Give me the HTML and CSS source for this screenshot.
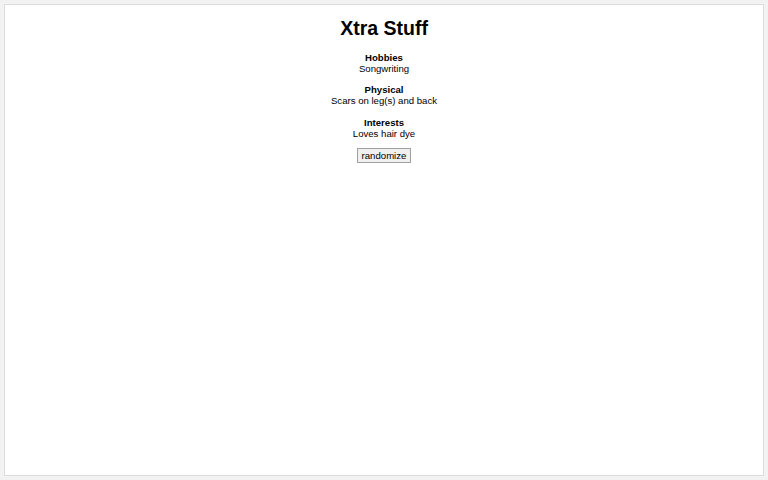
FILE: index.html
```html
<!DOCTYPE html>
<html lang="en">
<head>
  <meta charset="UTF-8">
  <title>Xtra Stuff</title>
  <link rel="stylesheet" href="styles.css">
</head>
<body>
  <div class="card">
    <h1>Xtra Stuff</h1>
    <div class="field">
      <div class="label">Hobbies</div>
      <div class="value">Songwriting</div>
    </div>
    <div class="field">
      <div class="label">Physical</div>
      <div class="value">Scars on leg(s) and back</div>
    </div>
    <div class="field">
      <div class="label">Interests</div>
      <div class="value">Loves hair dye</div>
    </div>
    <button class="randomize">randomize</button>
  </div>
</body>
</html>
```
FILE: styles.css
```css
body {
  margin: 0;
  padding: 4px;
  height: 480px;
  box-sizing: border-box;
  background-color: #f2f2f2;
  font-family: "Liberation Sans", Arial, sans-serif;
  color: #000;
}

.card {
  background: #fff;
  border: 1px solid #dcdcdc;
  height: 100%;
  box-sizing: border-box;
  text-align: center;
  padding-top: 11px;
}

h1 {
  font-size: 19.5px;
  font-weight: bold;
  margin: 0 0 12px 0;
  line-height: 24px;
}

.field {
  margin-bottom: 10px;
  font-size: 9.6px;
  line-height: 11px;
}

.field:nth-of-type(2) {
  margin-bottom: 11px;
}

.field:last-of-type {
  margin-bottom: 6px;
}

.label {
  font-weight: bold;
}

.randomize {
  font-family: "Liberation Sans", Arial, sans-serif;
  font-size: 9.6px;
  line-height: 11px;
  padding: 1px 4px;
  background: #f0f0f0;
  border: 1px solid #a0a0a0;
  border-radius: 0;
  color: #000;
}
```
